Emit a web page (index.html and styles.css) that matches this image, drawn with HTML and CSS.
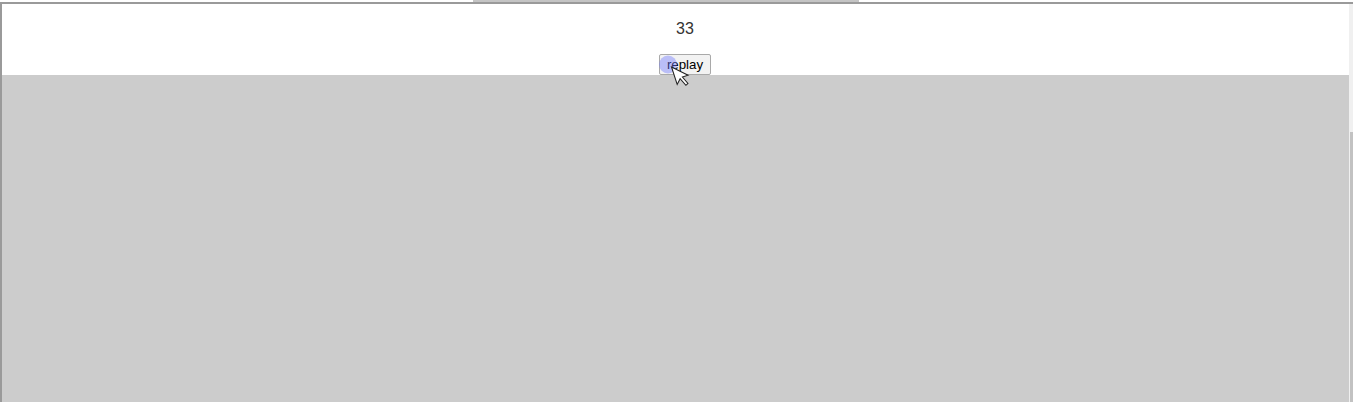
FILE: index.html
```html
<!DOCTYPE html>
<html>
<head>
<meta charset="utf-8">
<link rel="stylesheet" href="styles.css">
</head>
<body>
<div class="topstrip"><div class="hthumb"></div></div>
<div class="frame">
  <div class="view">
    <div class="top">
      <div class="count">33</div>
      <button class="replay">replay</button>
      <svg class="pointer" width="36" height="38" viewBox="0 0 36 38">
        <circle cx="9" cy="11.5" r="9" fill="rgba(110,120,255,0.42)"/>
        <g transform="translate(12.5 14) rotate(-18) scale(1.15)">
          <path d="M0 0 L0 16 L4 12 L7 19 L9.2 18 L6.3 11.3 L11.5 11.3 Z" fill="#fff" stroke="#222" stroke-width="0.9" stroke-linejoin="miter"/>
        </g>
      </svg>
    </div>
    <div class="stage"></div>
  </div>
  <div class="vscroll"><div class="vthumb"></div></div>
</div>
</body>
</html>
```
FILE: styles.css
```css
html, body {
  margin: 0;
  padding: 0;
  height: 100%;
  overflow: hidden;
  background: #fff;
  font-family: "Liberation Sans", Arial, sans-serif;
}
body {
  display: flex;
  flex-direction: column;
}
.topstrip {
  height: 2px;
  background: #fff;
  position: relative;
}
.hthumb {
  position: absolute;
  left: 473px;
  width: 386px;
  top: 0;
  height: 2px;
  background: #c4c4c4;
}
.frame {
  flex: 1;
  display: flex;
  border-top: 2px solid #9a9a9a;
  border-left: 2px solid #9a9a9a;
  min-height: 0;
}
.view {
  flex: 1;
  display: flex;
  flex-direction: column;
  min-width: 0;
}
.top {
  height: 71px;
  background: #fff;
  display: flex;
  flex-direction: column;
  align-items: center;
  padding-left: 19px;
  position: relative;
}
.count {
  margin-top: 15px;
  font-size: 16px;
  line-height: 20px;
  color: #333;
}
.replay {
  margin-top: 15px;
  height: 22px;
  padding: 0 7px;
  font-family: "Liberation Sans", Arial, sans-serif;
  font-size: 13.3px;
  color: #000;
  background: #f2f2f2;
  border: 1px solid #a9a9a9;
  border-radius: 2px;
}
.pointer {
  position: absolute;
  left: 657px;
  top: 49px;
  overflow: visible;
}
.stage {
  flex: 1;
  background: #cccccc;
}
.vscroll {
  width: 4px;
  background: #f0f0f0;
  position: relative;
}
.vthumb {
  position: absolute;
  left: 1px;
  right: 0;
  top: 128px;
  bottom: 0;
  background: #c2c2c2;
}
```
